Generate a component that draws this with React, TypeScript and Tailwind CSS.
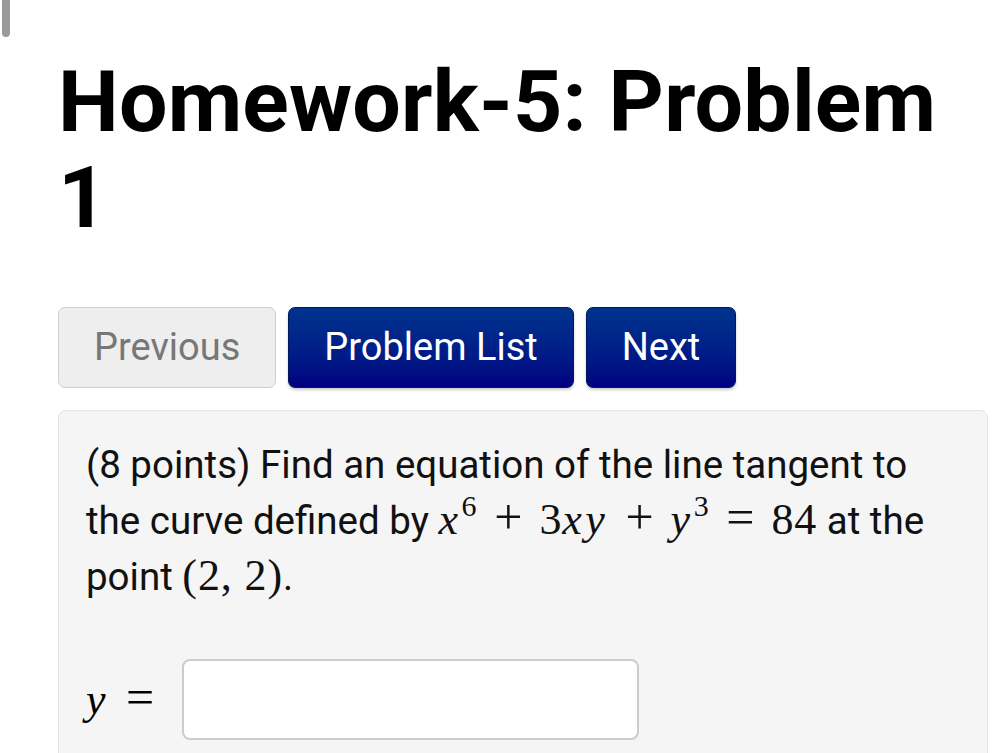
const mathFont = { fontFamily: '"Liberation Serif", "DejaVu Serif", serif' };

const V = ({ children }: { children: React.ReactNode }) => (
  <span className="italic tracking-[0.08em]" style={mathFont}>
    {children}
  </span>
);

const N = ({ children }: { children: React.ReactNode }) => (
  <span className="tracking-[0.02em]" style={mathFont}>
    {children}
  </span>
);

const Op = ({ children }: { children: React.ReactNode }) => (
  <span className="mx-[17px] text-[50px] leading-[0]" style={mathFont}>
    {children}
  </span>
);

const NavButton = ({ label, primary }: { label: string; primary?: boolean }) => (
  <button
    className={
      primary
        ? "h-[81px] px-[35px] rounded-[7px] border border-[#00185e] bg-gradient-to-b from-[#00338f] to-[#000080] text-white text-[38px] shadow-[0_2px_3px_rgba(0,0,0,0.2)]"
        : "h-[81px] px-[35px] rounded-[7px] border border-[#cfcfcf] bg-[#eeeeee] text-[#777777] text-[38px]"
    }
  >
    {label}
  </button>
);

export default function App() {
  return (
    <div
      className="relative min-h-[753px] bg-white text-black overflow-hidden"
      style={{ fontFamily: 'Roboto, "Liberation Sans", sans-serif' }}
    >
      <div className="absolute left-[2px] top-0 w-[8px] h-[37px] rounded-b-full bg-[#9a9a9a]" />
      <div className="pl-[58px] pr-[12px] pt-[54px]">
        <h1 className="text-[86px] leading-[96px] font-bold tracking-[0.2px]">
          Homework-5: Problem 1
        </h1>
        <div className="flex gap-[12px] mt-[61px]">
          <NavButton label="Previous" />
          <NavButton label="Problem List" primary />
          <NavButton label="Next" primary />
        </div>
        <div className="mt-[22px] rounded-[8px] border border-[#e3e3e3] bg-[#f5f5f5] px-[27px] pt-[26px] pb-[20px]">
          <p className="text-[38.5px] leading-[56px] text-[#111]">
            (8 points) Find an equation of the line tangent to the curve defined by{" "}
            <span className="text-[44px] leading-[0] whitespace-nowrap">
              <V>x</V>
              <sup className="text-[30px] -top-[0.6em]">
                <N>6</N>
              </sup>
              <Op>+</Op>
              <N>3</N>
              <V>xy</V>
              <Op>+</Op>
              <V>y</V>
              <sup className="text-[30px] -top-[0.6em]">
                <N>3</N>
              </sup>
              <Op>=</Op>
              <N>84</N>
            </span>{" "}
            at the point{" "}
            <span className="text-[44px] leading-[0]">
              <N>(2, 2)</N>
            </span>
            .
          </p>
          <div className="flex items-center mt-[54px] gap-[11px]">
            <span className="text-[44px] whitespace-nowrap">
              <V>y</V>
              <Op>=</Op>
            </span>
            <div className="w-[457px] h-[81px] rounded-[8px] border-2 border-[#cccccc] bg-white" />
          </div>
        </div>
      </div>
    </div>
  );
}
